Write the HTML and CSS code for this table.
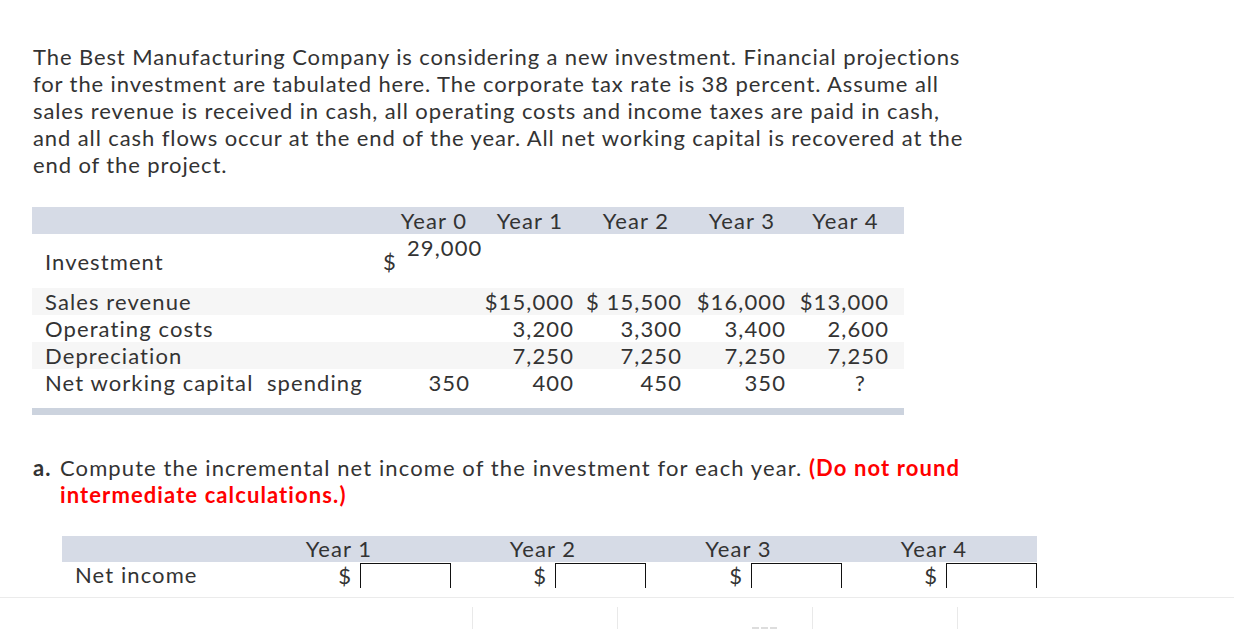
FILE: index.html
```html
<!DOCTYPE html>
<html lang="en">
<head>
<meta charset="utf-8">
<title>Best Manufacturing Company – Net income</title>
<link rel="stylesheet" href="styles.css">
</head>
<body>
<main class="page">
  <p class="intro">The Best Manufacturing Company is considering a new investment. Financial projections for the investment are tabulated here. The corporate tax rate is 38 percent. Assume all sales revenue is received in cash, all operating costs and income taxes are paid in cash, and all cash flows occur at the end of the year. All net working capital is recovered at the end of the project.</p>

  <div class="proj-wrap">
    <table class="proj">
      <colgroup>
        <col class="c-label"><col class="c-cur"><col class="c-y0"><col class="c-y"><col class="c-y2"><col class="c-y"><col class="c-y4"><col class="c-end">
      </colgroup>
      <thead>
        <tr class="head">
          <th></th><th></th><th class="h0">Year 0</th><th>Year 1</th><th>Year 2</th><th>Year 3</th><th>Year 4</th><th></th>
        </tr>
      </thead>
      <tbody>
        <tr class="inv">
          <td class="label">Investment</td><td class="cur">$</td><td class="inv-val">29,000</td><td></td><td></td><td></td><td></td><td></td>
        </tr>
        <tr class="stripe">
          <td class="label">Sales revenue</td><td></td><td></td><td class="num">$15,000</td><td class="num">$ 15,500</td><td class="num">$16,000</td><td class="num">$13,000</td><td></td>
        </tr>
        <tr>
          <td class="label">Operating costs</td><td></td><td></td><td class="num">3,200</td><td class="num">3,300</td><td class="num">3,400</td><td class="num">2,600</td><td></td>
        </tr>
        <tr class="stripe">
          <td class="label">Depreciation</td><td></td><td></td><td class="num">7,250</td><td class="num">7,250</td><td class="num">7,250</td><td class="num">7,250</td><td></td>
        </tr>
        <tr>
          <td class="label">Net working capital&nbsp; spending</td><td></td><td class="num">350</td><td class="num">400</td><td class="num">450</td><td class="num">350</td><td class="num q-mark">?</td><td></td>
        </tr>
      </tbody>
    </table>
  </div>

  <div class="question">
    <span class="q-label">a.</span>
    <p class="q-text">Compute the incremental net income of the investment for each year. <strong class="warn">(Do not round intermediate calculations.)</strong></p>
  </div>

  <div class="answer">
    <div class="a-head">
      <span></span>
      <span class="a-year">Year 1</span>
      <span class="a-year">Year 2</span>
      <span class="a-year">Year 3</span>
      <span class="a-year">Year 4</span>
    </div>
    <div class="a-row">
      <span class="a-label">Net income</span>
      <span class="a-cell"><span class="a-cur">$</span><input class="a-input" type="text" aria-label="Year 1 net income"></span>
      <span class="a-cell"><span class="a-cur">$</span><input class="a-input" type="text" aria-label="Year 2 net income"></span>
      <span class="a-cell"><span class="a-cur">$</span><input class="a-input" type="text" aria-label="Year 3 net income"></span>
      <span class="a-cell"><span class="a-cur">$</span><input class="a-input" type="text" aria-label="Year 4 net income"></span>
    </div>
  </div>
</main>

<footer class="footer">
  <div class="f-cols">
    <div class="f-col f-narrow"></div>
    <div class="f-col f-wide"><span class="f-marks"><i></i><i></i><i></i></span></div>
    <div class="f-col f-narrow"></div>
    <div class="f-col f-rest"></div>
  </div>
</footer>
</body>
</html>
```

FILE: styles.css
```css
* {
  box-sizing: border-box;
}

html, body {
  margin: 0;
  padding: 0;
  background: #ffffff;
}

body {
  font-family: Lato, "Open Sans", Arial, sans-serif;
  font-size: 22px;
  line-height: 27px;
  letter-spacing: 1.1px;
  color: #333333;
  overflow: hidden;
}

.page {
  padding: 43px 0 0 32px;
}

.intro {
  margin: 0;
  width: 950px;
  padding-left: 1px;
  letter-spacing: 0.9px;
}

/* projections table */
.proj-wrap {
  margin-top: 29px;
  width: 872px;
  padding-bottom: 12px;
  border-bottom: 7px solid #ccd3de;
}

.proj {
  width: 872px;
  table-layout: fixed;
  border-collapse: collapse;
  border-spacing: 0;
}

.c-label { width: 348px; }
.c-cur { width: 20px; }
.c-y0 { width: 73px; }
.c-y { width: 104px; }
.c-y2 { width: 108px; }
.c-y4 { width: 103px; }
.c-end { width: 12px; }

.proj th,
.proj td {
  padding: 0;
  height: 27px;
  font-weight: normal;
  white-space: nowrap;
  vertical-align: middle;
}

.proj .head th {
  background: #d6dbe6;
  text-align: center;
  padding-left: 10px;
}

.proj .head th.h0 {
  padding-left: 0;
  padding-right: 5px;
}

.proj .label {
  padding-left: 13px;
  text-align: left;
}

.proj .inv td {
  height: 54px;
}

.proj .cur {
  padding-left: 3px;
}

.proj .inv .inv-val {
  vertical-align: top;
  padding-left: 7px;
  overflow: visible;
}

.proj .num {
  text-align: right;
  padding-right: 3px;
}

.proj .q-mark {
  padding-right: 26px;
}

.proj .stripe td {
  background: #f6f6f6;
}

/* question */
.question {
  display: flex;
  margin-top: 39px;
  width: 1000px;
  padding-left: 1px;
}

.q-label {
  flex: 0 0 27px;
  font-weight: bold;
}

.q-text {
  flex: 1 1 auto;
  margin: 0;
}

.warn {
  color: #ff0000;
  font-weight: bold;
}

/* answer table */
.answer {
  margin-top: 28px;
  margin-left: 30px;
  width: 975px;
  height: 52px;
  overflow: hidden;
}

.a-head,
.a-row {
  display: grid;
  grid-template-columns: 176px 213px 195px 196px 195px;
  height: 26px;
  line-height: 26px;
}

.a-head {
  background: #d6dbe6;
}

.a-year {
  text-align: center;
  padding-right: 11px;
}

.a-label {
  padding-left: 13px;
}

.a-cell {
  display: flex;
  justify-content: flex-end;
  align-items: flex-start;
  gap: 8px;
}

.a-cur {
  line-height: 27px;
}

.a-input {
  display: block;
  width: 91px;
  height: 34px;
  margin: 1px 0 0;
  padding: 0 4px;
  border: 1px solid #111111;
  border-radius: 0;
  background: #ffffff;
  font: inherit;
  outline: none;
}

/* footer strip */
.footer {
  margin-top: 9px;
  border-top: 1px solid #ebebeb;
  padding-top: 9px;
}

.f-cols {
  display: flex;
  height: 40px;
  padding-left: 472px;
}

.f-col {
  border-left: 1px solid #e9e9e9;
  position: relative;
}

.f-narrow { width: 145px; }
.f-wide { width: 195px; }
.f-rest { flex: 1 1 auto; }

.f-marks {
  position: absolute;
  left: 134px;
  top: 20px;
  display: flex;
  gap: 2px;
}

.f-marks i {
  display: block;
  width: 7px;
  height: 3px;
  background: #dddddd;
}
```
